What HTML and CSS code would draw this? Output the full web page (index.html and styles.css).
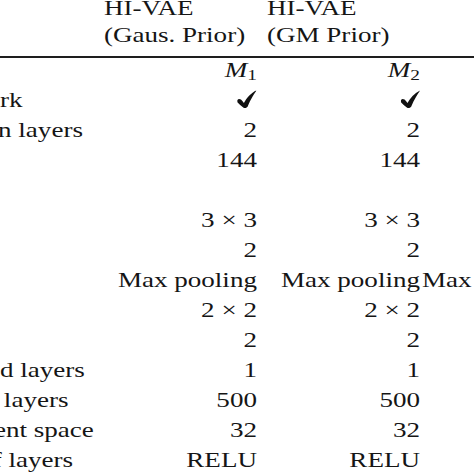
FILE: index.html
```html
<!DOCTYPE html>
<html lang="en">
<head>
<meta charset="utf-8">
<title>HI-VAE architecture table</title>
<link rel="stylesheet" href="styles.css">
</head>
<body>
<div class="sheet">
  <div class="table">
    <div class="row">
      <div class="cell"></div>
      <div class="head">HI-VAE<br>(Gaus. Prior)</div>
      <div class="head">HI-VAE<br>(GM Prior)</div>
      <div class="cell"></div>
    </div>
    <div class="rule"></div>

    <div class="row">
      <div class="cell lab"></div>
      <div class="cell num"><i>M</i><sub>1</sub></div>
      <div class="cell num"><i>M</i><sub>2</sub></div>
      <div class="cell"></div>
    </div>
    <div class="row">
      <div class="cell lab">rk</div>
      <div class="cell num"><svg class="check" viewBox="0 0 20 18" preserveAspectRatio="none" aria-label="yes"><path d="M1.2 9.2 Q3.8 8.6 5.6 11.2 L6.9 13.1 C9.6 8 13.8 3 19.8 0.3 C17.5 3.4 13.8 9 10.6 16.8 Q8.8 18.7 6.6 17.8 Q3.5 15.5 0.6 12.4 Q-0.2 10 1.2 9.2 Z"/></svg></div>
      <div class="cell num"><svg class="check" viewBox="0 0 20 18" preserveAspectRatio="none" aria-label="yes"><path d="M1.2 9.2 Q3.8 8.6 5.6 11.2 L6.9 13.1 C9.6 8 13.8 3 19.8 0.3 C17.5 3.4 13.8 9 10.6 16.8 Q8.8 18.7 6.6 17.8 Q3.5 15.5 0.6 12.4 Q-0.2 10 1.2 9.2 Z"/></svg></div>
      <div class="cell"></div>
    </div>
    <div class="row">
      <div class="cell lab lab-n">n layers</div>
      <div class="cell num">2</div>
      <div class="cell num">2</div>
      <div class="cell"></div>
    </div>
    <div class="row">
      <div class="cell lab"></div>
      <div class="cell num">144</div>
      <div class="cell num">144</div>
      <div class="cell"></div>
    </div>
    <div class="row">
      <div class="cell lab"></div>
      <div class="cell num"></div>
      <div class="cell num"></div>
      <div class="cell"></div>
    </div>
    <div class="row">
      <div class="cell lab"></div>
      <div class="cell num">3 × 3</div>
      <div class="cell num">3 × 3</div>
      <div class="cell"></div>
    </div>
    <div class="row">
      <div class="cell lab"></div>
      <div class="cell num">2</div>
      <div class="cell num">2</div>
      <div class="cell"></div>
    </div>
    <div class="row">
      <div class="cell lab"></div>
      <div class="cell num">Max pooling</div>
      <div class="cell num">Max pooling</div>
      <div class="cell extra">Max pooling</div>
    </div>
    <div class="row">
      <div class="cell lab"></div>
      <div class="cell num">2 × 2</div>
      <div class="cell num">2 × 2</div>
      <div class="cell"></div>
    </div>
    <div class="row">
      <div class="cell lab"></div>
      <div class="cell num">2</div>
      <div class="cell num">2</div>
      <div class="cell"></div>
    </div>
    <div class="row">
      <div class="cell lab">d layers</div>
      <div class="cell num">1</div>
      <div class="cell num">1</div>
      <div class="cell"></div>
    </div>
    <div class="row">
      <div class="cell lab lab-l">layers</div>
      <div class="cell num">500</div>
      <div class="cell num">500</div>
      <div class="cell"></div>
    </div>
    <div class="row">
      <div class="cell lab lab-e">ent space</div>
      <div class="cell num">32</div>
      <div class="cell num">32</div>
      <div class="cell"></div>
    </div>
    <div class="row">
      <div class="cell lab lab-f">f layers</div>
      <div class="cell num">RELU</div>
      <div class="cell num">RELU</div>
      <div class="cell"></div>
    </div>
  </div>
</div>
</body>
</html>
```

FILE: styles.css
```css
html, body {
  margin: 0;
  padding: 0;
  background: #ffffff;
  overflow: hidden;
}

.sheet {
  width: max-content;
  margin-top: -4.6px;
  transform: scaleX(1.288);
  transform-origin: 0 0;
  font-family: "Liberation Serif", "Times New Roman", serif;
  font-size: 21px;
  color: #151515;
}

.table {
  display: grid;
  grid-template-columns: 72.9px 126.6px 126.6px 140px;
  grid-template-rows: auto 2px;
  grid-auto-rows: 30px;
}

.row {
  display: contents;
}

.head {
  line-height: 27px;
  padding: 0 0 6.6px 7.8px;
  white-space: nowrap;
}

.rule {
  grid-column: 1 / -1;
  background: #1e1e1e;
}

.cell {
  line-height: 24px;
  white-space: nowrap;
}

.num {
  text-align: right;
}

.extra {
  text-align: left;
  padding-left: 1.5px;
}

.lab-n { margin-left: -1.5px; }
.lab-l { margin-left: 3px; }
.lab-e { margin-left: -4.7px; }
.lab-f { margin-left: -5.7px; }

i {
  font-style: italic;
}

sub {
  font-size: 15px;
  line-height: 0;
  vertical-align: -3px;
}

.check {
  width: 15.5px;
  height: 18px;
  vertical-align: -1px;
  fill: #111111;
}
```
